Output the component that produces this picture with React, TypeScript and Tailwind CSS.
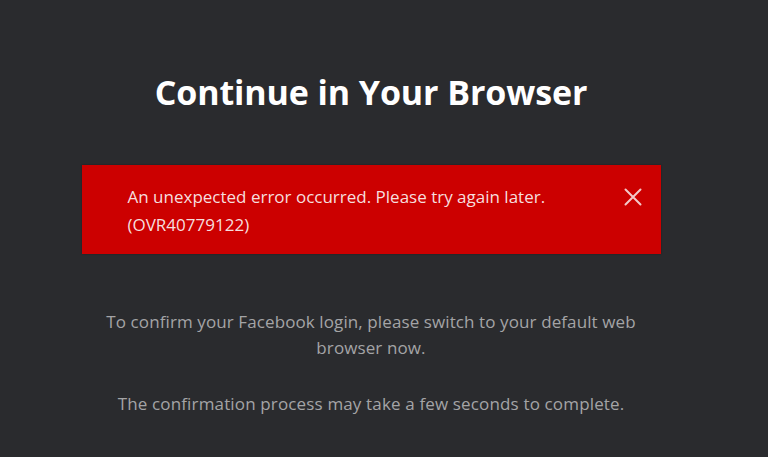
import React from "react";

export default function App() {
  return (
    <div
      className="w-[768px] h-[457px] overflow-hidden bg-[#2a2b2e] flex flex-col items-center pr-[26px]"
      style={{ fontFamily: '"Open Sans", "Noto Sans", sans-serif' }}
    >
      <h1 className="mt-[69px] text-[34px] leading-[46px] font-bold text-white tracking-[-0.1px]">
        Continue in Your Browser
      </h1>
      <div className="mt-[50px] w-[579px] h-[89px] bg-[#cc0000] flex items-start justify-between pl-[46px] pr-[19px] pt-[18px] shadow-[0_0_2px_rgba(0,0,0,0.3)]">
        <p className="text-[17px] leading-[28px] text-[#f6dede] tracking-[0px]">
          An unexpected error occurred. Please try again later.
          <br />
          (OVR40779122)
        </p>
        <svg width="18" height="18" viewBox="0 0 18 18" className="mt-[5px]">
          <path d="M1.5 1.5 L16.5 16.5 M16.5 1.5 L1.5 16.5" stroke="#f3c8c8" strokeWidth="2" strokeLinecap="round" />
        </svg>
      </div>
      <p className="mt-[55px] w-[560px] text-center text-[17px] leading-[26px] text-[#a4a4a6] tracking-[0.1px]">
        To confirm your Facebook login, please switch to your default web browser now.
      </p>
      <p className="mt-[30px] text-center text-[17px] leading-[26px] text-[#a4a4a6] tracking-[0.15px]">
        The confirmation process may take a few seconds to complete.
      </p>
    </div>
  );
}
